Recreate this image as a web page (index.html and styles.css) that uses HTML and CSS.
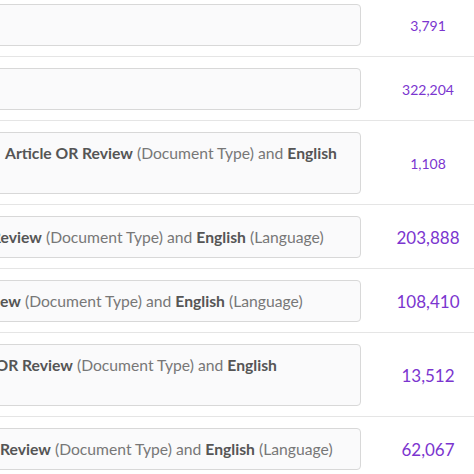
FILE: index.html
```html
<!DOCTYPE html>
<html lang="en">
<head>
<meta charset="utf-8">
<title>Search history</title>
<link rel="stylesheet" href="styles.css">
</head>
<body>
<div class="results">
  <div class="row">
    <div class="query"><p class="q r1">#1 TS=(microplastic*)</p></div>
    <div class="count small">3,791</div>
  </div>
  <div class="row">
    <div class="query"><p class="q r2">#2 TS=(toxicity)</p></div>
    <div class="count small">322,204</div>
  </div>
  <div class="row">
    <div class="query"><p class="q r3"><b>Article OR Review</b> (Document Type) and <b>English</b><br>(Language)</p></div>
    <div class="count small">1,108</div>
  </div>
  <div class="row">
    <div class="query"><p class="q r4"><b>Article OR Review</b> (Document Type) and <b>English</b> (Language)</p></div>
    <div class="count">203,888</div>
  </div>
  <div class="row">
    <div class="query"><p class="q r5"><b>Article OR Review</b> (Document Type) and <b>English</b> (Language)</p></div>
    <div class="count">108,410</div>
  </div>
  <div class="row">
    <div class="query"><p class="q r6"><b>Article OR Review</b> (Document Type) and <b>English</b><br>(Language)</p></div>
    <div class="count">13,512</div>
  </div>
  <div class="row">
    <div class="query"><p class="q r7"><b>Article OR Review</b> (Document Type) and <b>English</b> (Language)</p></div>
    <div class="count">62,067</div>
  </div>
</div>
</body>
</html>
```
FILE: styles.css
```css
html, body {
  margin: 0;
  padding: 0;
  background: #ffffff;
  overflow: hidden;
}
body {
  font-family: Lato, "Open Sans", sans-serif;
}
.results {
  margin-top: -7px;
  margin-left: -400px;
  width: 895px;
}
.row {
  display: flex;
  align-items: center;
  padding: 11px 0 10px;
  border-bottom: 1px solid #e5e5e5;
}
.query {
  width: 761px;
  flex: none;
  box-sizing: border-box;
  border: 1px solid #d8d8d8;
  border-radius: 4px;
  background: #fafafb;
  padding: 10px 0;
}
.q {
  margin: 0;
  font-size: 15.7px;
  line-height: 20px;
  color: #777777;
  white-space: nowrap;
  min-height: 20px;
}
.q b {
  color: #555555;
  font-weight: 700;
}
.r1, .r2 { padding-left: 12px; }
.r3 { text-indent: 404px; }
.r4 { text-indent: 313px; }
.r5 { text-indent: 292px; }
.r6 { text-indent: 344px; }
.r7 { text-indent: 322px; }
.count {
  flex: 1;
  text-align: center;
  color: #7b35cf;
  font-size: 17px;
}
.count.small {
  font-size: 14px;
}
```
